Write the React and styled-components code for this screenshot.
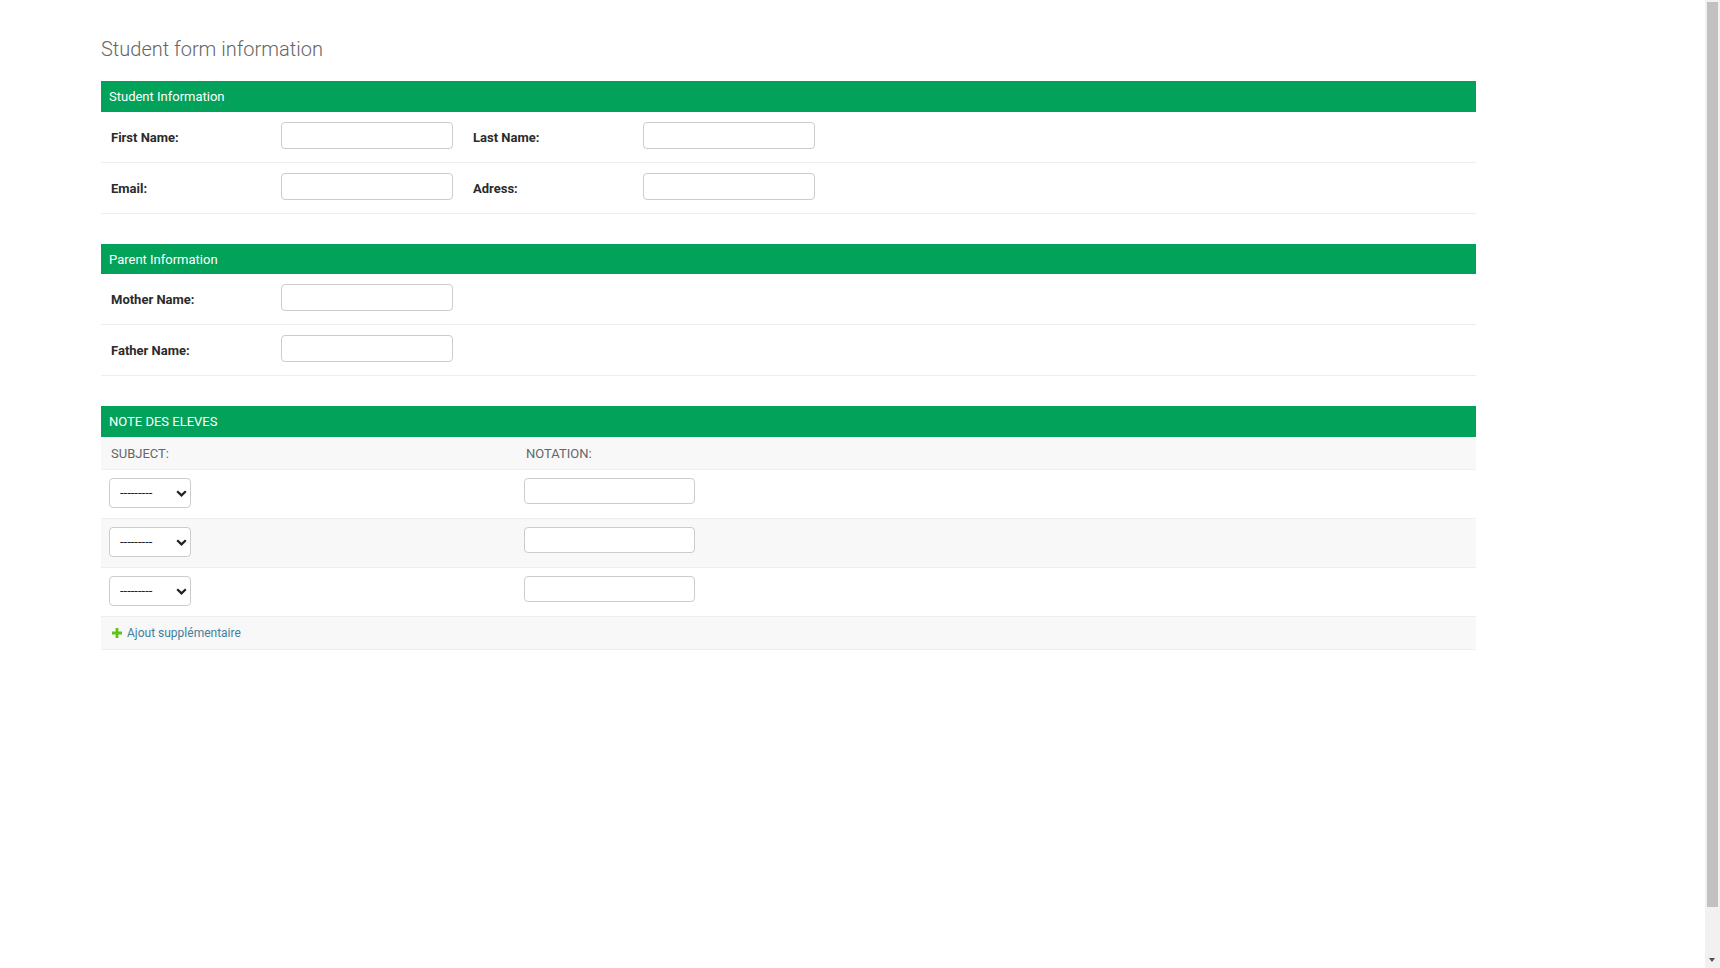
import React from 'react';
import styled, { createGlobalStyle } from 'styled-components';

const GlobalStyle = createGlobalStyle`
  html, body {
    margin: 0;
    padding: 0;
    background: #fff;
  }
  body {
    font-family: Roboto, "Liberation Sans", Arial, sans-serif;
    color: #333;
  }
`;

const GREEN = '#02a25a';

const studentRows = [
  [{ label: 'First Name:' }, { label: 'Last Name:' }],
  [{ label: 'Email:' }, { label: 'Adress:' }],
];

const parentRows = [[{ label: 'Mother Name:' }], [{ label: 'Father Name:' }]];

const Chevron = () => (
  <S.Chevron width="11" height="7" viewBox="0 0 11 7">
    <path d="M1.2 1.2 L5.5 5.4 L9.8 1.2" fill="none" stroke="#222" strokeWidth="2.2" />
  </S.Chevron>
);

const PlusIcon = () => (
  <svg width="10" height="10" viewBox="0 0 10 10">
    <path d="M3.6 0h2.8v3.6H10v2.8H6.4V10H3.6V6.4H0V3.6h3.6z" fill="#5cc614" />
  </svg>
);

const Fieldset = ({ title, rows }) => (
  <S.Module>
    <S.Bar>{title}</S.Bar>
    {rows.map((row, i) => (
      <S.FormRow key={i}>
        {row.map((field) => (
          <S.FieldBox key={field.label}>
            <S.Label>{field.label}</S.Label>
            <S.TextInput type="text" />
          </S.FieldBox>
        ))}
      </S.FormRow>
    ))}
  </S.Module>
);

const App = () => (
  <S.Page>
    <GlobalStyle />
    <S.Title>Student form information</S.Title>

    <Fieldset title="Student Information" rows={studentRows} />
    <Fieldset title="Parent Information" rows={parentRows} />

    <S.Module>
      <S.Bar>NOTE DES ELEVES</S.Bar>
      <S.GridRow $shade>
        <S.HeadCell>Subject:</S.HeadCell>
        <S.HeadCell>Notation:</S.HeadCell>
      </S.GridRow>
      {[0, 1, 2].map((i) => (
        <S.GridRow key={i} $shade={i % 2 === 1}>
          <S.Cell>
            <S.SelectWrap>
              <S.Select defaultValue="">
                <option value="">---------</option>
              </S.Select>
              <Chevron />
            </S.SelectWrap>
          </S.Cell>
          <S.Cell>
            <S.TextInput type="text" $short />
          </S.Cell>
        </S.GridRow>
      ))}
      <S.AddRow>
        <S.AddLink href="#">
          <PlusIcon />
          Ajout supplémentaire
        </S.AddLink>
      </S.AddRow>
    </S.Module>

    {/* browser scrollbar as seen in the capture */}
    <S.ScrollTrack>
      <S.ScrollThumb />
      <S.ScrollArrow />
    </S.ScrollTrack>
  </S.Page>
);

const S = {};

S.Page = styled.div`
  box-sizing: border-box;
  padding: 37px 0 0 101px;
  width: 1476px;
`;

S.Title = styled.h1`
  margin: 0 0 20px;
  font-size: 20px;
  font-weight: 300;
  color: #666;
  line-height: normal;
`;

S.Module = styled.div`
  margin-bottom: 30px;
`;

S.Bar = styled.h2`
  margin: 0;
  padding: 9px 8px 7px;
  font-size: 13px;
  font-weight: 400;
  line-height: 14.7px;
  color: #fff;
  background: ${GREEN};
`;

S.FormRow = styled.div`
  display: flex;
  padding: 10px 10px 13px;
  border-bottom: 1px solid #eee;
`;

S.FieldBox = styled.div`
  display: flex;
  align-items: flex-start;
  margin-right: 20px;
`;

S.Label = styled.label`
  box-sizing: border-box;
  width: 170px;
  padding: 9px 10px 0 0;
  font-size: 13px;
  font-weight: 700;
  line-height: 1;
  color: #2b2b2b;
`;

S.TextInput = styled.input`
  box-sizing: border-box;
  width: ${(p) => (p.$short ? '171px' : '172px')};
  height: ${(p) => (p.$short ? '26px' : '27px')};
  margin: 0;
  padding: 5px 6px;
  border: 1px solid #ccc;
  border-radius: 4px;
  background: #fff;
  font-family: inherit;
  font-size: 13px;
  outline: none;
`;

S.GridRow = styled.div`
  display: grid;
  grid-template-columns: 415px 1fr;
  border-bottom: 1px solid #eee;
  background: ${(p) => (p.$shade ? '#f8f8f8' : '#fff')};
`;

S.HeadCell = styled.div`
  padding: 9px 10px 7px;
  font-size: 13px;
  line-height: 16px;
  color: #666;
  text-transform: uppercase;
`;

S.Cell = styled.div`
  display: flex;
  align-items: flex-start;
  padding: 8px 8px 10.5px;
`;

S.SelectWrap = styled.div`
  position: relative;
  width: 82px;
  height: 29.5px;
`;

S.Select = styled.select`
  appearance: none;
  box-sizing: border-box;
  width: 100%;
  height: 100%;
  margin: 0;
  padding: 0 0 0 10px;
  border: 1px solid #ccc;
  border-radius: 4px;
  background: #fff;
  font-family: inherit;
  font-size: 13px;
  color: #222;
  outline: none;
`;

S.Chevron = styled.svg`
  position: absolute;
  top: 12px;
  right: 4px;
  pointer-events: none;
`;

S.AddRow = styled.div`
  padding: 7.5px 10px 8px;
  line-height: 16px;
  background: #f8f8f8;
  border-bottom: 1px solid #eee;
`;

S.AddLink = styled.a`
  display: inline-flex;
  align-items: center;
  gap: 5px;
  padding-left: 1px;
  font-size: 12px;
  color: #447e9b;
  text-decoration: none;
`;

S.ScrollTrack = styled.div`
  position: fixed;
  top: 0;
  right: 0;
  bottom: 0;
  width: 15px;
  background: #f1f1f1;
`;

S.ScrollThumb = styled.div`
  position: absolute;
  top: 2px;
  left: 2px;
  width: 11px;
  height: 905px;
  background: #c1c1c1;
`;

S.ScrollArrow = styled.div`
  position: absolute;
  bottom: 6px;
  left: 4px;
  width: 0;
  height: 0;
  border-left: 3.5px solid transparent;
  border-right: 3.5px solid transparent;
  border-top: 4px solid #505050;
`;

export default App;
